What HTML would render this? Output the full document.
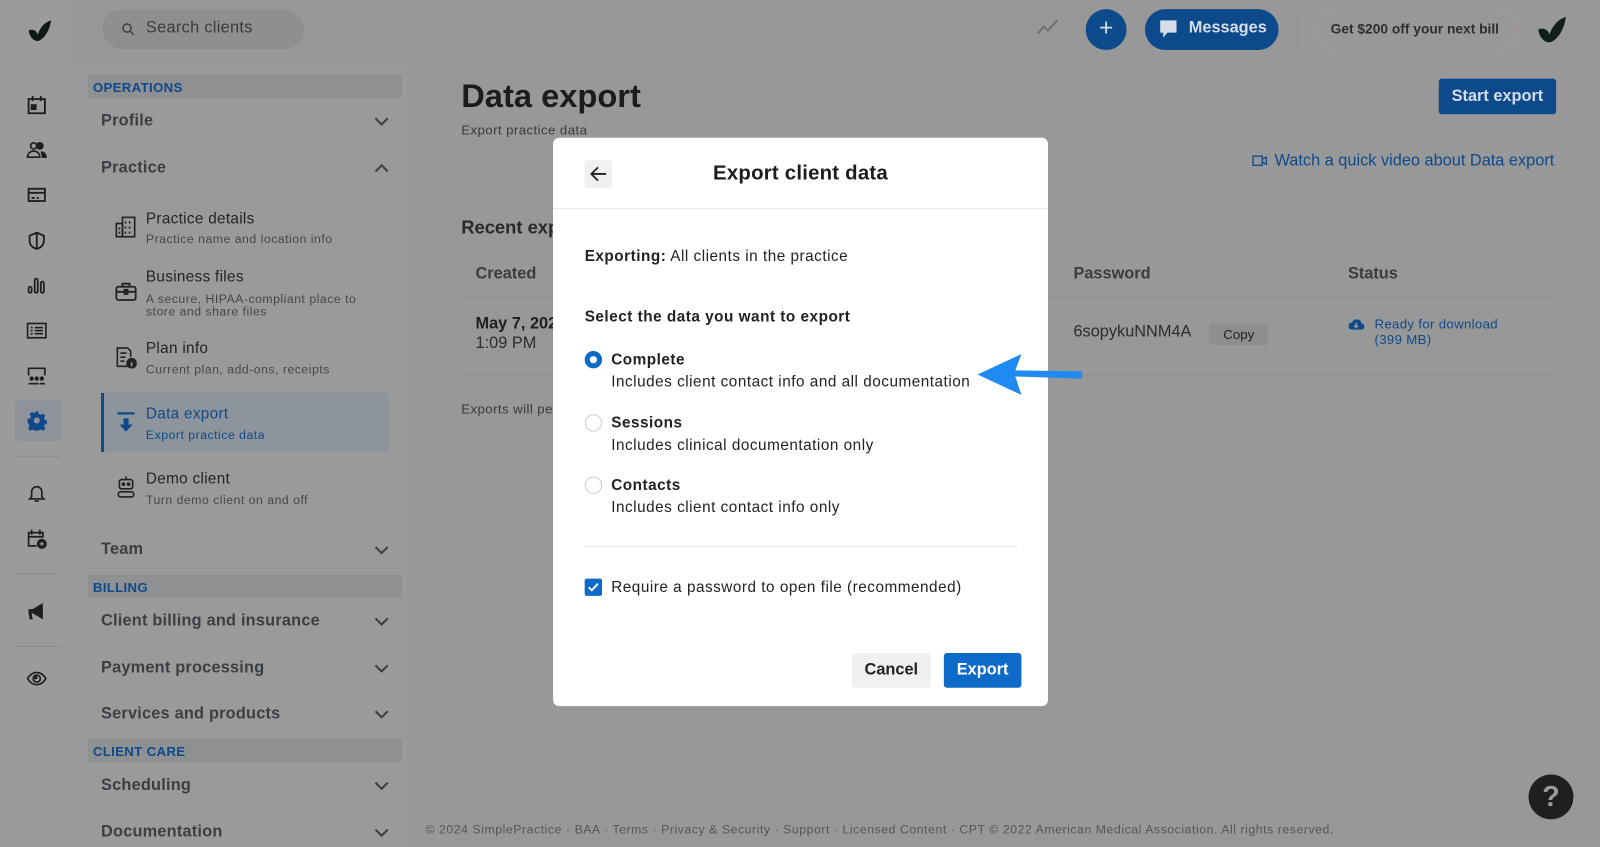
<!DOCTYPE html>
<html><head><meta charset="utf-8">
<style>
*{box-sizing:border-box;margin:0;padding:0}
html,body{width:1600px;height:847px;overflow:hidden;background:#989898}
body{font-family:"Liberation Sans",sans-serif;color:#2a2a2a}
#w{position:absolute;left:0;top:0;width:1568px;height:830px;transform:scale(1.0204);transform-origin:0 0;background:#989898}
.a{position:absolute;white-space:nowrap}
.rail{position:absolute;left:0;top:0;width:72px;height:830px;background:#9b9b9b}
.ic{position:absolute;left:26px;width:20px;height:20px}
.sep{position:absolute;left:13px;width:46px;height:1px;background:#8c8c8c}
.sh{position:absolute;left:86px;width:308px;height:23px;background:#8f9092;color:#0d4a8c;font-weight:bold;font-size:13px;padding:5px 0 0 5px;letter-spacing:.3px}
.nav{position:absolute;left:99px;font-size:16px;font-weight:bold;color:#3b3f44;letter-spacing:.2px}
.chev{position:absolute;left:367px;width:14px;height:9px}
.sub{position:absolute;left:143px;font-size:15px;color:#232323;letter-spacing:.3px}
.sd{position:absolute;left:143px;font-size:12px;color:#44484d;line-height:12px;letter-spacing:.5px}
.modal{position:absolute;left:542px;top:135px;width:485px;height:557px;background:#fff;border-radius:6px}
.m{position:absolute;white-space:nowrap;font-size:15px;color:#222;letter-spacing:.5px}
.b{font-weight:bold}
</style></head><body><div id="w">
<div class="rail">
<svg class="a" style="left:26px;top:18px" width="26" height="24" viewBox="0 0 26 24"><path d="M2 12c4-2 8 0 9 4 2-6 6-12 13-14-1 8-5 17-12 20C7 23 3 18 2 12z" fill="#0f1a17"/></svg>
<svg class="ic" style="top:93px" viewBox="0 0 20 20" fill="none" stroke="#1e1e1e" stroke-width="1.8"><rect x="2" y="4" width="16" height="14"/><path d="M6 1v5M14 1v5"/><rect x="5" y="10" width="4" height="4" fill="#1e1e1e"/></svg>
<svg class="ic" style="top:137px" viewBox="0 0 20 20" fill="none" stroke="#1e1e1e" stroke-width="1.6"><circle cx="7" cy="6" r="3"/><path d="M1 17c0-4 3-6 6-6s6 2 6 6z"/><circle cx="13" cy="6" r="3" fill="#1e1e1e"/><path d="M14 12c3 0 5 2 5 5h-4" fill="#1e1e1e"/></svg>
<svg class="ic" style="top:181px" viewBox="0 0 20 20" fill="none" stroke="#1e1e1e" stroke-width="1.8"><rect x="2" y="4" width="16" height="12"/><path d="M2 8h16M5 13h3M10 13h2"/></svg>
<svg class="ic" style="top:226px" viewBox="0 0 20 20" fill="none" stroke="#1e1e1e" stroke-width="1.8"><path d="M10 2l7 3v5c0 4-3 7-7 8-4-1-7-4-7-8V5z"/><path d="M10 2v16"/></svg>
<svg class="ic" style="top:270px" viewBox="0 0 20 20" fill="none" stroke="#1e1e1e" stroke-width="1.7"><rect x="2" y="11" width="3" height="6" rx="1.5"/><rect x="8" y="3" width="3" height="14" rx="1.5"/><rect x="14" y="6" width="3" height="11" rx="1.5"/></svg>
<svg class="ic" style="top:314px" viewBox="0 0 20 20" fill="none" stroke="#1e1e1e" stroke-width="1.6"><rect x="1" y="3" width="18" height="14"/><path d="M4 7h2M8 7h8M4 10h2M8 10h8M4 13h2M8 13h8"/></svg>
<svg class="ic" style="top:358px" viewBox="0 0 20 20" fill="none" stroke="#1e1e1e" stroke-width="1.6"><path d="M2 10V3h16v7"/><circle cx="5" cy="13" r="1.3" fill="#1e1e1e"/><circle cx="10" cy="13" r="1.3" fill="#1e1e1e"/><circle cx="15" cy="13" r="1.3" fill="#1e1e1e"/><path d="M2 18h6M8 18h4M13 18h5"/></svg>
<div class="a" style="left:14px;top:392px;width:46px;height:40px;background:#8f9399;border-radius:4px"></div>
<svg class="ic" style="top:402px" viewBox="0 0 20 20"><path fill="#0d4a8c" d="M8.5 1h3l.5 2.5 2 1 2.3-1.2 2.1 2.1-1.2 2.3.8 2 2.5.5v3l-2.5.5-.8 2 1.2 2.3-2.1 2.1-2.3-1.2-2 .8-.5 2.5h-3l-.5-2.5-2-.8-2.3 1.2-2.1-2.1 1.2-2.3-.8-2L1 11.5v-3l2.5-.5.8-2-1.2-2.3 2.1-2.1 2.3 1.2 2-1zM10 7a3 3 0 100 6 3 3 0 000-6z"/></svg>
<div class="sep" style="top:447px"></div>
<svg class="ic" style="top:473px" viewBox="0 0 20 20" fill="none" stroke="#1e1e1e" stroke-width="1.6"><path d="M5 14V9a5 5 0 0110 0v5l2 2H3z"/><path d="M8 18h4"/></svg>
<svg class="ic" style="top:518px" viewBox="0 0 20 20" fill="none" stroke="#1e1e1e" stroke-width="1.7"><path d="M10 17H2V4h14v5"/><path d="M5 1v5M13 1v5M2 8h14"/><circle cx="15" cy="15" r="4" fill="#1e1e1e"/><path d="M15 13v4M13 15h4" stroke="#9b9b9b" stroke-width="1.3"/></svg>
<div class="sep" style="top:562px"></div>
<svg class="ic" style="top:589px" viewBox="0 0 20 20"><path fill="#1e1e1e" d="M2 8h4l10-6v16L6 12H5l1 6H3l-1-6z"/></svg>
<div class="sep" style="top:633px"></div>
<svg class="ic" style="top:655px" viewBox="0 0 20 20" fill="none" stroke="#1e1e1e" stroke-width="1.6"><path d="M1 10c3-5 6-6 9-6s6 1 9 6c-3 5-6 6-9 6s-6-1-9-6z"/><circle cx="10" cy="10" r="3.5"/><circle cx="9" cy="9" r="1" fill="#1e1e1e"/></svg>
</div>
<div class="a" style="left:72px;top:61px;width:1496px;height:1px;background:#939393"></div>
<div class="a" style="left:100px;top:9px;width:198px;height:39px;border-radius:20px;background:#8f8f8f"></div>
<svg class="a" style="left:119px;top:22px" width="13" height="13" viewBox="0 0 13 13" fill="none" stroke="#3b3b3b" stroke-width="1.4"><circle cx="5.5" cy="5.5" r="4"/><path d="M8.5 8.5l3.5 3.5"/></svg>
<div class="a" style="left:143px;top:19px;font-size:16px;color:#3b3b3b;letter-spacing:.3px">Search clients</div>
<svg class="a" style="left:1016px;top:19px" width="22" height="16" viewBox="0 0 22 16" fill="none" stroke="#6f6f6f" stroke-width="1.8"><path d="M1 14l6-7 4 4 9-10"/></svg>
<div class="a" style="left:1064px;top:9px;width:40px;height:40px;border-radius:50%;background:#0d4a8c;color:#d5dde8;font-size:24px;text-align:center;line-height:38px">+</div>
<div class="a" style="left:1122px;top:9px;width:131px;height:40px;border-radius:20px;background:#0d4a8c"></div>
<svg class="a" style="left:1135px;top:19px" width="20" height="20" viewBox="0 0 20 20"><path fill="#d5dde8" d="M2 1h16v12H9l-4 5v-5H2z"/></svg>
<div class="a b" style="left:1165px;top:19px;font-size:16px;color:#d5dde8">Messages</div>
<div class="a" style="left:1271px;top:12px;width:1px;height:36px;background:#8e8e8e"></div>
<div class="a" style="left:1290px;top:9px;width:199px;height:40px;border-radius:20px;border:1px solid #a69a9c"></div>
<div class="a b" style="left:1304px;top:21px;font-size:13.5px;color:#2e2e2e">Get $200 off your next bill</div>
<svg class="a" style="left:1505px;top:13px" width="32" height="32" viewBox="0 0 26 24"><path d="M2 12c4-2 8 0 9 4 2-6 6-12 13-14-1 8-5 17-12 20C7 23 3 18 2 12z" fill="#0f1f1b"/></svg>
<div class="a" style="left:72px;top:62px;width:330px;height:768px;background:#9a9a9a"></div>
<div class="sh" style="top:73px">OPERATIONS</div>
<div class="nav" style="top:110px">Profile</div>
<div class="nav" style="top:156px">Practice</div>
<div class="nav" style="top:530px">Team</div>
<div class="sh" style="top:563px">BILLING</div>
<div class="nav" style="top:600px">Client billing and insurance</div>
<div class="nav" style="top:646px">Payment processing</div>
<div class="nav" style="top:691px">Services and products</div>
<div class="sh" style="top:724px">CLIENT CARE</div>
<div class="nav" style="top:761px">Scheduling</div>
<div class="nav" style="top:807px">Documentation</div>
<svg class="chev" style="top:115px" viewBox="0 0 14 9" fill="none" stroke="#3b3f44" stroke-width="2"><path d="M1 1l6 6 6-6"/></svg>
<svg class="chev" style="top:160px" viewBox="0 0 14 9" fill="none" stroke="#3b3f44" stroke-width="2"><path d="M1 8l6-6 6 6"/></svg>
<svg class="chev" style="top:535px" viewBox="0 0 14 9" fill="none" stroke="#3b3f44" stroke-width="2"><path d="M1 1l6 6 6-6"/></svg>
<svg class="chev" style="top:605px" viewBox="0 0 14 9" fill="none" stroke="#3b3f44" stroke-width="2"><path d="M1 1l6 6 6-6"/></svg>
<svg class="chev" style="top:651px" viewBox="0 0 14 9" fill="none" stroke="#3b3f44" stroke-width="2"><path d="M1 1l6 6 6-6"/></svg>
<svg class="chev" style="top:696px" viewBox="0 0 14 9" fill="none" stroke="#3b3f44" stroke-width="2"><path d="M1 1l6 6 6-6"/></svg>
<svg class="chev" style="top:766px" viewBox="0 0 14 9" fill="none" stroke="#3b3f44" stroke-width="2"><path d="M1 1l6 6 6-6"/></svg>
<svg class="chev" style="top:812px" viewBox="0 0 14 9" fill="none" stroke="#3b3f44" stroke-width="2"><path d="M1 1l6 6 6-6"/></svg>
<svg class="a" style="left:113px;top:212px" width="21" height="21" viewBox="0 0 21 21" fill="none" stroke="#222" stroke-width="1.6"><rect x="1" y="7" width="6" height="13"/><rect x="7" y="1" width="12" height="19"/><path d="M10 5v2M14 5v2M10 10v2M14 10v2M10 15v2M14 15v2M4 11v2M4 15v2"/></svg>
<svg class="a" style="left:113px;top:276px" width="21" height="19" viewBox="0 0 21 19" fill="none" stroke="#222" stroke-width="1.8"><rect x="1" y="5" width="19" height="13" rx="2"/><path d="M7 5V2h7v3M1 10h19"/><rect x="9" y="8" width="3" height="4" fill="#222"/></svg>
<svg class="a" style="left:113px;top:340px" width="21" height="21" viewBox="0 0 21 21" fill="none" stroke="#222" stroke-width="1.6"><path d="M12 19H2V1h10l3 3v6"/><path d="M5 6h6M5 10h5M5 14h4"/><circle cx="16" cy="16" r="4.5" fill="#222"/><path d="M16 15v4" stroke="#9a9a9a" stroke-width="1.5"/></svg>
<div class="a" style="left:99px;top:385px;width:282px;height:58px;background:#8e949b;border-radius:0 4px 4px 0;border-left:3px solid #0d4a8c"></div>
<svg class="a" style="left:115px;top:404px" width="17" height="21" viewBox="0 0 17 21"><path d="M0 1h17" stroke="#0d4a8c" stroke-width="2.5"/><path fill="#0d4a8c" d="M6 6h5v6h4l-6.5 7L2 12h4z"/></svg>
<svg class="a" style="left:113px;top:466px" width="21" height="23" viewBox="0 0 21 23" fill="none" stroke="#222" stroke-width="1.6"><path d="M10.5 1v3"/><rect x="4" y="4" width="13" height="9" rx="2"/><circle cx="8" cy="8.5" r="1" fill="#222"/><circle cx="13" cy="8.5" r="1" fill="#222"/><rect x="3" y="16" width="15" height="5" rx="2"/></svg>
<div class="sub" style="top:206px">Practice details</div><div class="sd" style="top:228px">Practice name and location info</div>
<div class="sub" style="top:263px">Business files</div><div class="sd" style="top:287px">A secure, HIPAA-compliant place to<br>store and share files</div>
<div class="sub" style="top:333px">Plan info</div><div class="sd" style="top:356px">Current plan, add-ons, receipts</div>
<div class="sub" style="top:397px;color:#0d4a8c">Data export</div><div class="sd" style="top:420px;color:#0d4a8c">Export practice data</div>
<div class="sub" style="top:461px">Demo client</div><div class="sd" style="top:484px">Turn demo client on and off</div>
<div class="a b" style="left:452px;top:76px;font-size:32px;color:#1c1c1c">Data export</div>
<div class="a" style="left:452px;top:120px;font-size:13px;color:#3a3a3a;letter-spacing:.4px">Export practice data</div>
<div class="a b" style="left:1410px;top:77px;width:115px;height:35px;background:#0d4a8c;border-radius:3px;color:#d5dde8;font-size:16px;text-align:center;line-height:35px">Start export</div>
<svg class="a" style="left:1227px;top:152px" width="15" height="11" viewBox="0 0 15 11" fill="none" stroke="#0d4a8c" stroke-width="1.3"><rect x="1" y="1" width="9" height="9"/><path d="M10 4l4-2v7l-4-2"/></svg>
<div class="a" style="left:1249px;top:149px;font-size:16px;color:#0d4a8c">Watch a quick video about Data export</div>
<div class="a b" style="left:452px;top:213px;font-size:18px;color:#2a2a2a">Recent exports</div>
<div class="a b" style="left:466px;top:260px;font-size:16px;color:#3c3c3c">Created</div>
<div class="a b" style="left:1052px;top:260px;font-size:16px;color:#3c3c3c">Password</div>
<div class="a b" style="left:1321px;top:260px;font-size:16px;color:#3c3c3c">Status</div>
<div class="a" style="left:452px;top:290px;width:1073px;height:1px;background:#919191"></div>
<div class="a" style="left:452px;top:367px;width:1073px;height:1px;background:#919191"></div>
<div class="a b" style="left:466px;top:309px;font-size:16px;color:#1f1f1f">May 7, 2024</div>
<div class="a" style="left:466px;top:328px;font-size:16px;color:#2c2c2c">1:09 PM</div>
<div class="a" style="left:1052px;top:317px;font-size:16px;color:#2c2c2c">6sopykuNNM4A</div>
<div class="a" style="left:1185px;top:317px;width:58px;height:21px;background:#8e8e8e;border-radius:3px;font-size:13px;text-align:center;line-height:21px;color:#222">Copy</div>
<svg class="a" style="left:1321px;top:311px" width="16" height="13" viewBox="0 0 16 13"><path fill="#0d4a8c" d="M4 12a3.5 3.5 0 010-7 5 5 0 019.5 1A3 3 0 0113 12z"/><path d="M8 5v5M6 8l2 2 2-2" stroke="#989898" stroke-width="1.4" fill="none"/></svg>
<div class="a" style="left:1347px;top:310px;font-size:13px;color:#0d4a8c;line-height:15px;letter-spacing:.3px">Ready for download<br>(399 MB)</div>
<div class="a" style="left:452px;top:393px;font-size:13px;color:#3a3a3a;letter-spacing:.4px">Exports will persist for 7 days</div>
<div class="a" style="left:417px;top:806px;font-size:12px;color:#555;letter-spacing:.55px">© 2024 SimplePractice · BAA · Terms · Privacy &amp; Security · Support · Licensed Content · CPT © 2022 American Medical Association. All rights reserved.</div>
<div class="a" style="left:1498px;top:759px;width:44px;height:44px;border-radius:50%;background:#1f1f1f;color:#9a9a9a;font-size:28px;font-weight:bold;text-align:center;line-height:44px">?</div>
<div class="modal">
<div class="a" style="left:31px;top:22px;width:27px;height:27px;background:#f0f0f0;border-radius:3px"></div>
<svg class="a" style="left:36px;top:27px" width="17" height="17" viewBox="0 0 17 17" fill="none" stroke="#222" stroke-width="1.8"><path d="M16 8.5H2M8 2L1.5 8.5 8 15"/></svg>
<div class="m" style="left:0;width:485px;text-align:center;top:24px;font-size:20px;color:#1c1c1c;font-weight:bold;letter-spacing:.2px">Export client data</div>
<div class="a" style="left:0;top:69px;width:485px;height:1px;background:#e6e6e6"></div>
<div class="m" style="left:31px;top:108px"><b>Exporting:</b> All clients in the practice</div>
<div class="m b" style="left:31px;top:167px">Select the data you want to export</div>
<div class="a" style="left:31px;top:209px;width:17px;height:17px;border-radius:50%;border:5px solid #0e6ac9;background:#fff"></div>
<div class="m b" style="left:57px;top:209px">Complete</div>
<div class="m" style="left:57px;top:231px">Includes client contact info and all documentation</div>
<div class="a" style="left:31px;top:271px;width:17px;height:17px;border-radius:50%;border:1px solid #ccc"></div>
<div class="m b" style="left:57px;top:271px">Sessions</div>
<div class="m" style="left:57px;top:293px">Includes clinical documentation only</div>
<div class="a" style="left:31px;top:332px;width:17px;height:17px;border-radius:50%;border:1px solid #ccc"></div>
<div class="m b" style="left:57px;top:332px">Contacts</div>
<div class="m" style="left:57px;top:354px">Includes client contact info only</div>
<div class="a" style="left:31px;top:400px;width:424px;height:1px;background:#e6e6e6"></div>
<div class="a" style="left:31px;top:432px;width:17px;height:17px;border-radius:2px;background:#0e6ac9"></div>
<svg class="a" style="left:34px;top:436px" width="11" height="9" viewBox="0 0 11 9" fill="none" stroke="#fff" stroke-width="1.8"><path d="M1 4.5l3 3L10 1"/></svg>
<div class="m" style="left:57px;top:432px">Require a password to open file (recommended)</div>
<div class="a b" style="left:293px;top:505px;width:77px;height:34px;background:#f0f0f0;border-radius:3px;font-size:16px;text-align:center;line-height:34px;color:#222">Cancel</div>
<div class="a b" style="left:383px;top:505px;width:76px;height:34px;background:#0e6ac9;border-radius:3px;font-size:16px;text-align:center;line-height:34px;color:#fff">Export</div>
</div>
<svg class="a" style="left:955px;top:344px" width="110" height="46" viewBox="0 0 110 46"><path fill="#1e8af2" d="M3 23L46 3l-6 16 66 1-1 7-65-2 6 18z"/></svg>
</div></body></html>
